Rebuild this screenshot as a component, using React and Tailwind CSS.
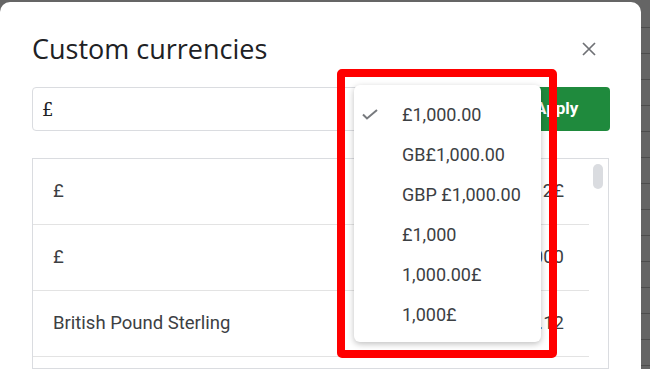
import React from 'react';

const rows = [
    { name: '£', sample: '1,000.12£' },
    { name: '£', sample: '£1,000.000' },
    { name: 'British Pound Sterling', sample: '£1,000.12' },
];

const formats = ['£1,000.00', 'GB£1,000.00', 'GBP £1,000.00', '£1,000', '1,000.00£', '1,000£'];

const App = () => {
    return (
        <div className="w-[650px] h-[369px] bg-[#656565] flex pt-[2px] overflow-hidden relative" style={{ fontFamily: 'Roboto, "Liberation Sans", sans-serif' }}>
            {/* Dialog */}
            <div className="w-[641px] shrink-0 bg-white rounded-t-[10px] px-8 flex flex-col">
                {/* Header */}
                <div className="flex items-center justify-between pt-[27px]">
                    <h1 className="text-[27px] leading-[40px] text-[#202124]" style={{ fontFamily: '"Open Sans", Roboto, sans-serif' }}>
                        Custom currencies
                    </h1>
                    <svg width="14" height="14" viewBox="0 0 14 14" className="mr-[13px]">
                        <path d="M1 1L13 13M13 1L1 13" stroke="#6f7175" strokeWidth="1.7" />
                    </svg>
                </div>

                {/* Input + Apply */}
                <div className="flex gap-3 mt-[18px]">
                    <div className="flex-1 h-[44px] border border-[#dadce0] rounded flex items-center px-[9px] text-[18px] text-[#202124]" style={{ fontFamily: '"DejaVu Serif", serif' }}>
                        £
                    </div>
                    <button className="w-[92px] h-[44px] rounded bg-[#1f8a3d] text-white text-[17px] font-bold text-left pl-[17px] mr-[-1px]">
                        Apply
                    </button>
                </div>

                {/* Currency list */}
                <div className="mt-[27px] border border-[#dadce0] flex-1 relative">
                    {rows.map((r, i) => (
                        <div key={i} className="h-[66px] border-b border-[#e3e3e3] mr-[19px] flex items-center justify-between pl-5 pr-[25px] text-[18.5px] text-[#3c4043]">
                            <span>{r.name}</span>
                            <span>{r.sample}</span>
                        </div>
                    ))}
                    <div className="absolute right-[5px] top-[5px] w-[10px] h-[25px] rounded-full bg-[#dadce0]" />
                </div>
            </div>

            {/* Sheet behind */}
            <div className="flex-1 flex flex-col">
                {Array.from({ length: 15 }).map((_, i) => (
                    <div key={i} className="h-[26px] shrink-0 border-b border-[#4d4d4d]" />
                ))}
            </div>

            {/* Format dropdown */}
            <div className="absolute left-[354px] top-[85px] w-[187px] h-[257px] bg-white rounded-md shadow-[0_2px_6px_rgba(0,0,0,0.25)] pt-[9px]">
                {formats.map((f, i) => (
                    <div key={f} className="h-[40px] flex items-center text-[18px] text-[#3c4043]">
                        <span className="w-[48px] flex pl-[8px]">
                            {i === 0 && (
                                <svg width="16" height="11" viewBox="0 0 16 11">
                                    <path d="M1 5.5L5 9.5L15 1" stroke="#777a7e" strokeWidth="2" fill="none" />
                                </svg>
                            )}
                        </span>
                        <span>{f}</span>
                    </div>
                ))}
            </div>

            {/* Highlight box */}
            <div className="absolute left-[337px] top-[69px] w-[220px] h-[289px] border-[8px] border-[#ff0000] rounded-[5px]" />
        </div>
    );
};

export default App;
